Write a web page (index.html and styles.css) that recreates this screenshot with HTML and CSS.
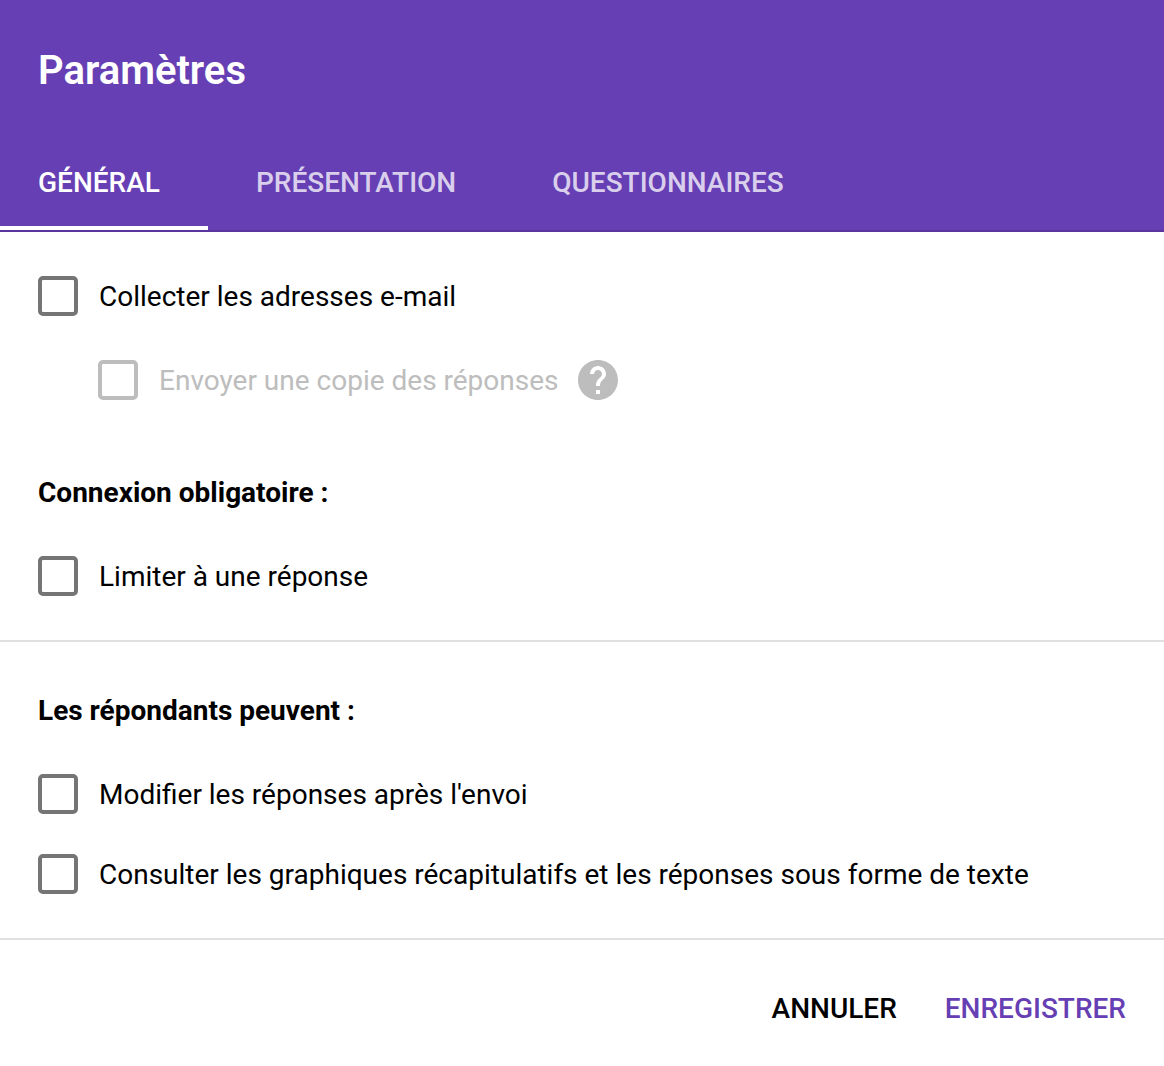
FILE: index.html
```html
<!DOCTYPE html>
<html lang="fr">
<head>
<meta charset="utf-8">
<meta name="viewport" content="width=device-width, initial-scale=1">
<title>Paramètres</title>
<link rel="stylesheet" href="styles.css">
</head>
<body>
<main class="dialog">
  <header class="header">
    <h1 class="title">Paramètres</h1>
    <nav class="tabs" role="tablist">
      <button class="tab tab-active" type="button" role="tab" aria-selected="true">GÉNÉRAL</button>
      <button class="tab" type="button" role="tab" aria-selected="false">PRÉSENTATION</button>
      <button class="tab" type="button" role="tab" aria-selected="false">QUESTIONNAIRES</button>
    </nav>
  </header>
  <form class="form">
    <section class="section">
      <div class="option">
        <input class="checkbox" type="checkbox" id="collect">
        <label for="collect">Collecter les adresses e-mail</label>
      </div>
      <div class="option option-nested">
        <input class="checkbox" type="checkbox" id="copy" disabled>
        <label for="copy">Envoyer une copie des réponses</label>
        <button class="help" type="button" aria-label="Aide">
          <svg viewBox="2 2 20 20" width="40" height="40" fill="currentColor" aria-hidden="true"><path d="M12 2C6.48 2 2 6.48 2 12s4.48 10 10 10 10-4.48 10-10S17.52 2 12 2zm1 17h-2v-2h2v2zm2.07-7.75l-.9.92C13.45 12.9 13 13.5 13 15h-2v-.5c0-1.1.45-2.1 1.17-2.83l1.24-1.26c.37-.36.59-.86.59-1.41 0-1.1-.9-2-2-2s-2 .9-2 2H8c0-2.21 1.79-4 4-4s4 1.79 4 4c0 .88-.36 1.68-.93 2.25z"/></svg>
        </button>
      </div>
      <h2 class="subtitle subtitle-spaced">Connexion obligatoire :</h2>
      <div class="option">
        <input class="checkbox" type="checkbox" id="limit">
        <label for="limit">Limiter à une réponse</label>
      </div>
    </section>
    <section class="section">
      <h2 class="subtitle">Les répondants peuvent :</h2>
      <div class="option">
        <input class="checkbox" type="checkbox" id="edit">
        <label for="edit">Modifier les réponses après l'envoi</label>
      </div>
      <div class="option option-last">
        <input class="checkbox" type="checkbox" id="summary">
        <label for="summary">Consulter les graphiques récapitulatifs et les réponses sous forme de texte</label>
      </div>
    </section>
    <footer class="actions">
      <button class="action" type="button">ANNULER</button>
      <button class="action action-primary" type="submit">ENREGISTRER</button>
    </footer>
  </form>
</main>
</body>
</html>
```
FILE: styles.css
```css
* {
  box-sizing: border-box;
}

body {
  margin: 0;
  background: #fff;
  color: #000;
  font: 400 28px/42px Roboto, sans-serif;
}

button {
  margin: 0;
  padding: 0;
  border: 0;
  background: none;
  color: inherit;
  font: inherit;
  cursor: pointer;
}

.header {
  padding-top: 46px;
  border-bottom: 2px solid #5a359e;
  background: #673fb4;
  color: #fff;
}

.title {
  margin: 0;
  padding: 0 38px;
  font-size: 40px;
  font-weight: 600;
  line-height: 50px;
}

.tabs {
  display: flex;
  margin-top: 38px;
}

.tab {
  padding: 28px 48px 22px;
  border-bottom: 4px solid transparent;
  color: rgba(255, 255, 255, 0.76);
  font-weight: 500;
}

.tab-active {
  padding-left: 38px;
  border-color: #fff;
  color: #fff;
}

.section {
  padding: 44px 38px 42px;
  border-bottom: 2px solid #e0e0e0;
}

.option {
  display: flex;
  align-items: flex-start;
}

.option-nested {
  margin: 42px 0 0 60px;
  color: #bdbdbd;
}

.option-last {
  margin-top: 38px;
}

.checkbox {
  flex: none;
  width: 40px;
  height: 40px;
  margin: 0 21px 0 0;
  appearance: none;
  border: 4px solid #757575;
  border-radius: 5px;
}

.checkbox:disabled {
  border-color: #bdbdbd;
}

.checkbox:checked {
  border-color: #673fb4;
  background: #673fb4;
}

.help {
  display: flex;
  margin-left: 19px;
}

.subtitle {
  margin: 4px 0 42px;
  font-size: 28px;
  font-weight: 700;
}

.subtitle-spaced {
  margin-top: 70px;
}

.actions {
  display: flex;
  justify-content: flex-end;
  gap: 48px;
  padding: 48px 38px 36px;
}

.action {
  font-weight: 500;
}

.action-primary {
  color: #673fb4;
}
```
